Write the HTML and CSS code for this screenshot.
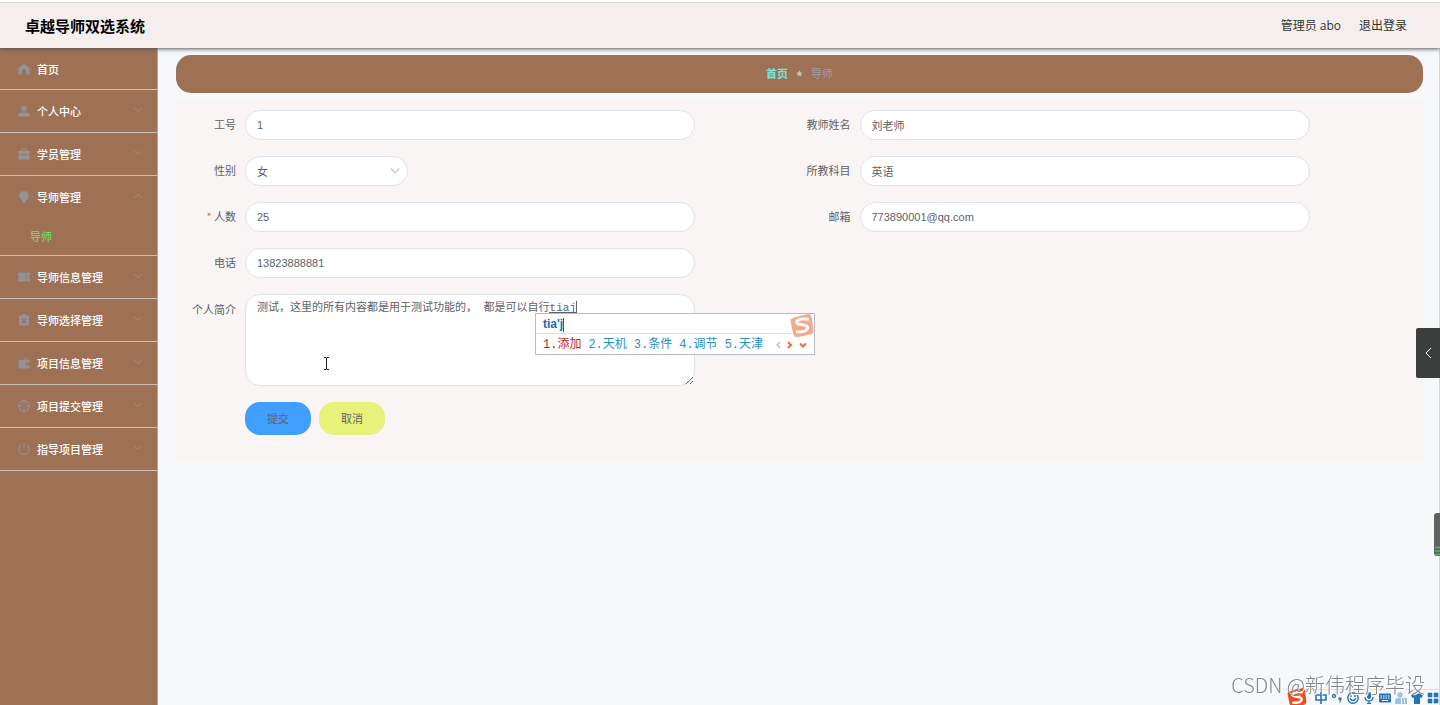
FILE: index.html
```html
<!DOCTYPE html>
<html lang="zh-CN">
<head>
<meta charset="utf-8">
<title>卓越导师双选系统</title>
<link rel="stylesheet" href="styles.css">
</head>
<body>
<svg class="defs" aria-hidden="true">
  <symbol id="down" viewBox="0 0 10 10"><path d="M1.500 3 5 6.500 8.500 3" fill="none" stroke="currentColor" stroke-width=".9"/></symbol>
  <symbol id="sogou" viewBox="0 0 24 24">
    <path d="M3 4Q12 1 19 0q2 0 3 3 1 8 2 14 0 3-3 4-8 2-14 3-3 0-4-3Q1 13 0 7q0-2 3-3z" fill="currentColor"/>
    <path d="M19 5.500Q10 4 6.500 7.500c-2 5 12 2 11.500 7-1 4-7 4.500-12 4" fill="none" stroke="#fff" stroke-width="3"/>
  </symbol>
</svg>
<header class="header">
  <h1 class="title">卓越导师双选系统</h1>
  <div class="account"><span>管理员 abo</span><a href="#">退出登录</a></div>
</header>
<div class="layout">
  <nav class="sidebar">
    <a class="item" href="#"><svg class="icon" viewBox="0 0 12 12"><path d="M6 .5 11.500 5v6q0 .5-.5.5H8V8q0-2-2-2T4 8v3.500H1Q.5 11.500.5 11V5z" fill="currentColor"/></svg>首页</a>
    <button class="item"><svg class="icon" viewBox="0 0 12 12"><circle cx="6" cy="3.500" r="3" fill="currentColor"/><path d="M.5 11.500V10q0-2.500 3-2.500h5q3 0 3 2.500v1.500z" fill="currentColor"/></svg>个人中心<svg class="arrow"><use href="#down"/></svg></button>
    <button class="item"><svg class="icon" viewBox="0 0 12 12"><path d="M.5 3h11v3.500H.5zM.5 7.200h11v4.300H.5z" fill="currentColor"/><path d="M3.500 3V1h5v2" fill="none" stroke="currentColor"/></svg>学员管理<svg class="arrow"><use href="#down"/></svg></button>
    <div class="group">
      <button class="item" aria-expanded="true"><svg class="icon" viewBox="0 0 12 12"><path d="M6 .2q4.800 0 4.800 5 0 2.500-3.300 4.300L8 10 6.800 12H5.200L4 10l.5-.5Q1.200 7.500 1.200 5.200 1.200.2 6 .2z" fill="currentColor"/></svg>导师管理<svg class="arrow up"><use href="#down"/></svg></button>
      <a class="subitem" href="#">导师</a>
    </div>
    <button class="item"><svg class="icon" viewBox="0 0 12 12"><path d="M0 1.500h7.500v1h1v-1H12V4q-2 2 0 4v2.500H8.500v-1h-1v1H0V8q2-2 0-4zM7.500 4v1.500h1V4zm0 2.500V8h1V6.500z" fill="currentColor" fill-rule="evenodd"/></svg>导师信息管理<svg class="arrow"><use href="#down"/></svg></button>
    <button class="item"><svg class="icon" viewBox="0 0 12 12"><path d="M1 1.500h10v10H1zM4 0h4v2H4z" fill="currentColor"/><path d="m4 4.500 4 4.500m0-4.500L4 9" stroke="#9e7054" stroke-width="1.200"/></svg>导师选择管理<svg class="arrow"><use href="#down"/></svg></button>
    <button class="item"><svg class="icon" viewBox="0 0 12 12"><path d="M.5 3h11v2.500H8.500q-2 1.500 0 3h3v3H.5zM5 2.500 8.500.8l1.200 1.700z" fill="currentColor"/><circle cx="9" cy="7" r=".7" fill="currentColor"/></svg>项目信息管理<svg class="arrow"><use href="#down"/></svg></button>
    <button class="item"><svg class="icon" viewBox="0 0 12 12"><circle cx="6" cy="6" r="5.400" fill="none" stroke="currentColor" stroke-width="1.100"/><path d="M6 .5v4M6 7.500v4M.5 6h4m3 0h4" stroke="currentColor" stroke-width="1.100"/></svg>项目提交管理<svg class="arrow"><use href="#down"/></svg></button>
    <button class="item"><svg class="icon" viewBox="0 0 12 12"><path d="M3.500 1.700a5.200 5.200 0 1 0 5 0M6 0v5.500" fill="none" stroke="currentColor" stroke-width="1.100"/></svg>指导项目管理<svg class="arrow"><use href="#down"/></svg></button>
  </nav>
  <main class="main">
    <nav class="crumbs"><a href="#">首页</a><svg class="star" viewBox="0 0 10 10"><path d="m5 .5 1.400 3 3.300.4-2.500 2.200.7 3.300L5 7.800 2.100 9.400l.7-3.300L.3 3.900l3.300-.4z" fill="currentColor"/></svg><span>导师</span></nav>
    <form class="panel">
      <div class="field"><label for="no">工号</label><input id="no" value="1"></div>
      <div class="field"><label for="name">教师姓名</label><input id="name" value="刘老师"></div>
      <div class="field"><label for="sex">性别</label><div class="selectbox"><select id="sex"><option>女</option><option>男</option></select><svg class="selectarrow"><use href="#down"/></svg></div></div>
      <div class="field"><label for="subject">所教科目</label><input id="subject" value="英语"></div>
      <div class="field"><label for="count"><span class="required">*</span> 人数</label><input id="count" value="25"></div>
      <div class="field"><label for="mail">邮箱</label><input id="mail" value="773890001@qq.com"></div>
      <div class="field wide"><label for="phone">电话</label><input id="phone" value="13823888881"></div>
      <div class="field wide area"><label for="intro">个人简介</label>
        <div class="areabox">
          <textarea id="intro" spellcheck="false">测试，这里的所有内容都是用于测试功能的， 都是可以自行tiaj</textarea>
          <div class="composing"></div>
          <div class="ime">
            <div class="typed">tia'j</div>
            <div class="choices"><span class="picked">1.添加</span><span>2.天机</span><span>3.条件</span><span>4.调节</span><span>5.天津</span>
              <svg class="pager" viewBox="0 0 34 10"><path d="M5 2 2 5l3 3" fill="none" stroke="#bbb" stroke-width="1.300"/><path d="m13 2 3 3-3 3M25 3.500l3 3 3-3" fill="none" stroke="#ee6c3b" stroke-width="2"/></svg>
            </div>
            <svg class="imelogo"><use href="#sogou"/></svg>
          </div>
          <svg class="pointer" viewBox="0 0 7 13"><path d="M1 .5h2l.5.5.5-.5h2M3.500 1v11M1 12.500h2l.5-.5.5.5h2" fill="none" stroke="#222"/></svg>
        </div>
      </div>
      <div class="actions wide"><button class="submit" type="button">提交</button><button class="cancel" type="button">取消</button></div>
    </form>
  </main>
</div>
<button class="drawer" aria-label="展开"><svg viewBox="0 0 8 12"><path d="M7 1 2 6l5 5" fill="none" stroke="#fff"/></svg></button>
<div class="meter"><svg viewBox="0 0 6 10"><path d="M1 1.500h5M1 5h5M1 8.500h5" stroke="#49b86b" stroke-width="1.500"/></svg></div>
<div class="imebar">
  <svg class="barlogo"><use href="#sogou"/></svg>
  <svg viewBox="0 0 12 12"><path d="M1 3h10v5H1zM6 0v12" fill="none" stroke="currentColor" stroke-width="1.600"/></svg>
  <svg viewBox="0 0 12 12"><circle cx="3" cy="4" r="1.500" fill="none" stroke="currentColor" stroke-width="1.300"/><path d="M7.500 5.500h3q.5 3.500-2 5l-.5-.8q1-.7 1-1.700H7.500z" fill="currentColor"/></svg>
  <svg viewBox="0 0 12 12"><circle cx="6" cy="6" r="5.200" fill="none" stroke="currentColor" stroke-width="1.400"/><path d="M4 3v2m4-2v2M3 6.500q3 4 6 0" fill="none" stroke="currentColor" stroke-width="1.300"/></svg>
  <svg viewBox="0 0 12 12"><rect x="4" width="4" height="7" rx="2" fill="currentColor"/><path d="M2 5q0 4 4 4t4-4M6 9v3M4 11.500h4" fill="none" stroke="currentColor" stroke-width="1.300"/></svg>
  <svg viewBox="0 0 12 12"><rect y="1.500" width="12" height="9" rx="1" fill="currentColor"/><path d="M1.500 4h9m-9 2h9" stroke="#fff" stroke-dasharray="1.500 1"/><path d="M3 8.500h6" stroke="#fff"/></svg>
  <svg class="faded" viewBox="0 0 12 12"><circle cx="5" cy="3" r="2.700" fill="currentColor"/><path d="M0 12V9q0-3 3-3h3v6zM7 6h5v6H7z" fill="currentColor"/><path d="M9.500 7v4" stroke="#fff"/></svg>
  <svg viewBox="0 0 12 12"><path d="m3.500 1 2.500 1L8.500 1 12 3.500 10.500 6 9 5.500V12H3V5.500L1.500 6 0 3.500z" fill="currentColor"/></svg>
  <svg viewBox="0 0 12 12"><path d="M1 1h4v4H1zM7 1h4v4H7zM1 7h4v4H1zM7 7h4v4H7z" fill="currentColor" stroke="currentColor" stroke-width=".6"/></svg>
</div>
<div class="watermark">CSDN @新伟程序毕设</div>
</body>
</html>
```
FILE: styles.css
```css
* { box-sizing: border-box; }
body {
  margin: 0;
  min-height: 100vh;
  display: flex;
  flex-direction: column;
  overflow: hidden;
  background: #f6f8fa;
  color: #606266;
  font: 11px/20px "Noto Sans CJK SC", sans-serif;
}
button, input, select, textarea { font: inherit; color: inherit; }
button { border: 0; cursor: pointer; }
a { color: inherit; text-decoration: none; }
.defs { position: absolute; width: 0; height: 0; }

.header {
  position: relative;
  display: flex;
  justify-content: space-between;
  align-items: center;
  height: 48px;
  padding: 2px 33px 0 25px;
  border-top: 2px solid #fff;
  background: #f4eeed;
  box-shadow: inset 0 1px #d6d3d3, 0 1px 4px #555;
}
.title { margin: 0; color: #000; font-size: 15px; font-weight: 700; }
.account { display: flex; gap: 18px; color: #333; font: 12px/20px "Open Sans", "Noto Sans CJK SC", sans-serif; }

.layout { display: flex; flex: 1; }
.sidebar { flex: none; width: 158px; background: #9e7054; color: #fff; border-right: 1px solid #bfa494; font-weight: 500; }
.item {
  display: flex;
  align-items: center;
  width: 100%;
  height: 43px;
  padding: 0 14px 0 18px;
  border-bottom: 1px solid #d0beb4;
  background: none;
}
a.item { height: 42px; }
.icon { width: 12px; height: 12px; margin-right: 7px; color: #909399; }
.arrow { width: 10px; height: 10px; margin: 0 0 3px auto; color: #a99486; }
.up { transform: rotate(180deg); }
.group { border-bottom: 1px solid #d0beb4; }
.group .item { height: 42px; border: 0; }
.subitem { display: block; height: 37px; padding: 8px 30px; color: #78e06c; font-weight: 400; }

.main { flex: 1; padding: 7px 16px 20px 18px; border-right: 1px solid #d4d6d8; }
.crumbs {
  display: flex;
  justify-content: center;
  align-items: center;
  gap: 8px;
  height: 38px;
  padding-bottom: 2px;
  border-radius: 15px;
  background: #9e7054;
  color: #a39d9b;
}
.crumbs a { color: #74e5db; font-weight: 700; }
.star { width: 7px; height: 7px; color: #c0c4cc; }

.panel {
  display: grid;
  grid-template-columns: 1fr 1fr;
  gap: 16px 0;
  margin-top: 7px;
  padding: 10px 9px 26px;
  background: #f9f5f4;
}
.wide { grid-column: 1 / -1; }
.field { display: flex; align-items: center; gap: 9px; }
.field label { flex: none; width: 51px; padding-bottom: 2px; text-align: right; white-space: nowrap; }
.required { color: #f56c6c; }
.field input, .field select, .field textarea {
  height: 30px;
  padding: 0 11px;
  border: 1px solid #dfe2e9;
  border-radius: 15px;
  background: #fff;
  outline: 0;
}
.field input { width: 450px; max-width: 85%; font-family: "Liberation Sans", "Noto Sans CJK SC", sans-serif; }
.selectbox { position: relative; width: 163px; }
.field select { width: 100%; appearance: none; }
.selectarrow { position: absolute; right: 7px; top: 9px; width: 12px; height: 12px; color: #b4b8c0; pointer-events: none; }
.area { align-items: flex-start; }
.area label { padding-top: 5px; }
.areabox { position: relative; width: 450px; }
.field textarea {
  display: block;
  width: 100%;
  height: 92px;
  padding: 3px 11px;
  font-family: "Liberation Mono", "Noto Sans CJK SC", monospace;
}
.composing { position: absolute; left: 304px; top: 7px; width: 28px; height: 12px; border: solid #606266; border-width: 0 1px 1px 0; }
.ime {
  position: absolute;
  left: 290px;
  top: 19px;
  width: 280px;
  height: 42px;
  border: 1px solid #b9bbc6;
  background: #fff;
  color: #2b8fc0;
  font: 12px/20px "Liberation Mono", "Noto Sans CJK SC", monospace;
}
.typed { width: 255px; height: 20px; padding-left: 7px; border-bottom: 1px solid #ddd; color: #1768b8; font-family: "Liberation Sans", sans-serif; font-weight: 700; }
.typed::after { content: ""; display: inline-block; height: 14px; border-left: 1px solid #a22; vertical-align: middle; }
.choices { display: flex; align-items: center; gap: 7px; padding: 1px 0 0 7px; white-space: nowrap; }
.picked { color: #be2525; }
.pager { width: 34px; height: 10px; margin-left: 5px; }
.imelogo { position: absolute; right: 0; top: 0; width: 24px; height: 23px; color: #f5a98c; }
.pointer { position: absolute; left: 78px; top: 63px; width: 7px; height: 13px; }
.actions { display: flex; gap: 8px; padding-left: 60px; }
.actions button { width: 66px; height: 33px; padding: 0 0 2px; border-radius: 15px; }
.submit { background: #409eff; }
.cancel { background: #e7f27a; }

.drawer { position: fixed; right: 0; top: 328px; display: flex; align-items: center; justify-content: center; width: 24px; height: 50px; padding: 0; border-radius: 2px 0 0 2px; background: #3d3f3e; }
.drawer svg { width: 8px; height: 12px; }
.meter { position: fixed; right: 0; top: 513px; width: 6px; height: 43px; display: flex; align-items: flex-end; border-radius: 3px 0 0 3px; background: #606261; }
.meter svg { width: 6px; height: 10px; }
.imebar { position: fixed; right: 1px; bottom: 0; display: flex; align-items: center; gap: 4px; height: 16px; border-top: 1px solid #ddd; color: #2474b8; }
.imebar svg { width: 12px; height: 12px; }
.imebar .barlogo { width: 22px; height: 19px; margin-right: 3px; color: #ee4d20; }
.imebar .faded { opacity: .4; }
.watermark { position: fixed; right: 15px; bottom: 5px; color: #85878a; font: 300 20px/30px "Noto Sans CJK SC", sans-serif; text-shadow: 1px 1px #fff; }
```
